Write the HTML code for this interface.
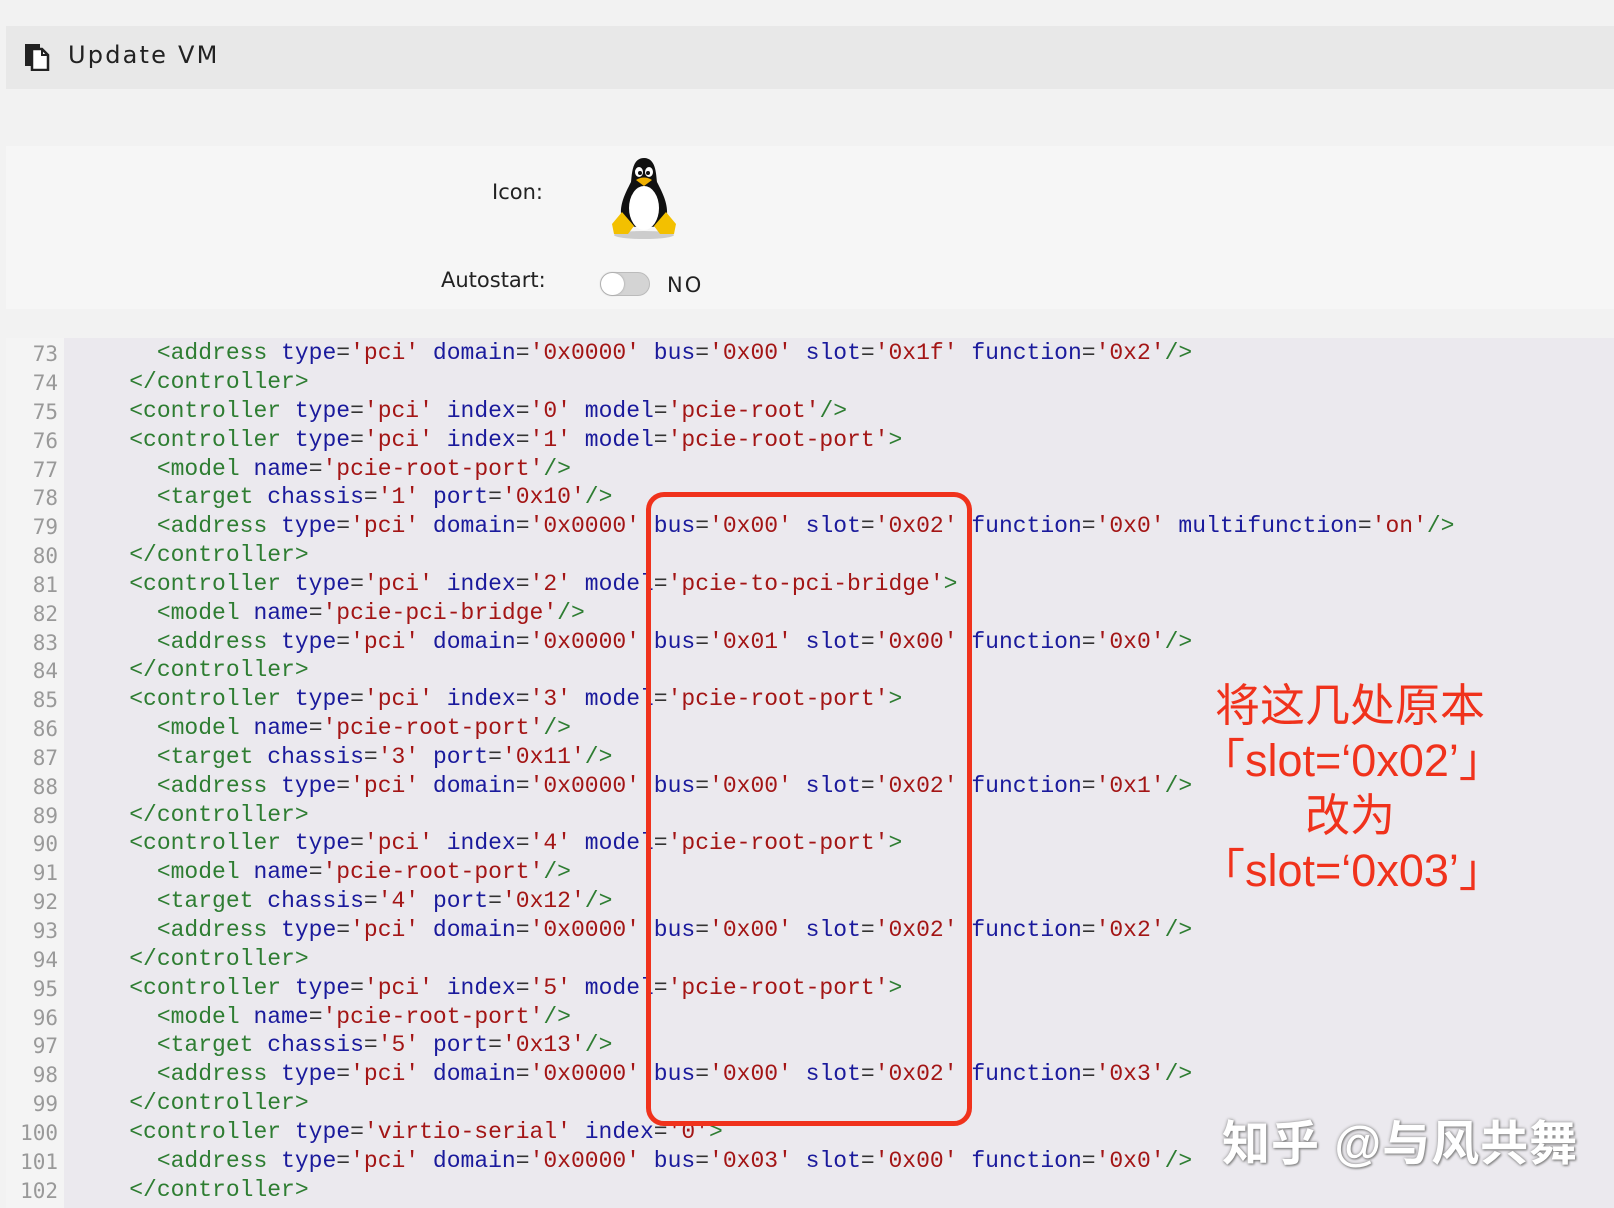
<!DOCTYPE html>
<html><head><meta charset="utf-8"><style>
*{margin:0;padding:0;box-sizing:border-box}
body{width:1614px;height:1208px;background:#f2f2f2;position:relative;overflow:hidden;font-family:"Liberation Sans","Noto Sans CJK SC",sans-serif}
.hdr{position:absolute;left:6px;top:26px;width:1608px;height:63px;background:#e8e8e8}
.hdr span{position:absolute;left:62px;top:15px;font-size:24px;letter-spacing:2.2px;color:#222;font-family:"DejaVu Sans",sans-serif}
.form{position:absolute;left:6px;top:146px;width:1608px;height:163px;background:#f6f6f6}
.lbl{position:absolute;font-size:21px;color:#222;font-family:"DejaVu Sans",sans-serif}
.code{position:absolute;left:6px;top:338px;width:1608px;height:870px;background:#ebe9ee}
.gut{position:absolute;left:6px;top:338px;width:58px;height:870px;background:#f4f4f4}
.ln{position:absolute;left:6px;width:52px;text-align:right;color:#999;font-family:"DejaVu Sans Mono",monospace;font-size:21px}
.cl{position:absolute;left:74px;white-space:pre;font-family:"Liberation Mono",monospace;font-size:23px;color:#333;letter-spacing:0}
#c{position:absolute;left:0;top:2px;width:1614px}
.t{color:#2e7d32}.a{color:#1a1a9c}.v{color:#a31515}
.box{position:absolute;left:646px;top:492px;width:326px;height:634px;border:5px solid #f0321c;border-radius:18px}
.note{position:absolute;left:1200px;width:300px;text-align:center;color:#f0321c;font-size:45px;line-height:55px;top:678px}
.wm{position:absolute;left:1222px;top:1104px;font-size:48px;letter-spacing:1px;color:#fff;font-weight:bold;text-shadow:0 0 3px #888,1px 1px 2px #777}
</style></head><body>
<div class="hdr">
<svg style="position:absolute;left:18px;top:17px" width="26" height="28" viewBox="0 0 26 28"><rect x="1" y="1" width="15" height="22" fill="#222"/><path d="M8 6h10l6 6v15H8z" fill="#fff" stroke="#222" stroke-width="2.5"/><path d="M18 6v6h6" fill="none" stroke="#222" stroke-width="2"/></svg>
<span>Update VM</span></div>
<div class="form">
<div class="lbl" style="left:486px;top:34px">Icon:</div>
<svg style="position:absolute;left:602px;top:10px" width="72" height="84" viewBox="0 0 72 84">
<ellipse cx="36" cy="79" rx="30" ry="4" fill="#ccc"/>
<path d="M36 2C24 2 24 18 23 26 18 36 10 50 14 64 18 74 54 74 58 64 62 50 54 36 49 26 48 18 48 2 36 2z" fill="#111"/>
<ellipse cx="36" cy="52" rx="15" ry="22" fill="#fff"/>
<ellipse cx="31" cy="16" rx="4" ry="5" fill="#fff"/><ellipse cx="41" cy="16" rx="4" ry="5" fill="#fff"/>
<circle cx="32" cy="17" r="2" fill="#111"/><circle cx="40" cy="17" r="2" fill="#111"/>
<path d="M28 24q8-5 16 0l-8 6z" fill="#f0b000"/>
<path d="M4 68l10-12 12 14-6 8-14 0z" fill="#f3c000"/><path d="M68 68l-10-12-12 14 6 8 14 0z" fill="#f3c000"/>
</svg>
<div class="lbl" style="left:435px;top:122px">Autostart:</div>
<div style="position:absolute;left:594px;top:126px;width:50px;height:24px;border-radius:12px;background:#d4d4d4;border:1px solid #bbb"><div style="width:23px;height:22px;border-radius:11px;background:#fff;box-shadow:0 0 2px #999"></div></div>
<div class="lbl" style="left:661px;top:127px;letter-spacing:2px">NO</div>
</div>
<div class="code"></div><div class="gut"></div>
<div id="c">
<div class="ln" style="top:340px">73</div><div class="cl" style="top:338px">      <span class="t">&lt;address</span> <span class="a">type</span>=<span class="v">'pci'</span> <span class="a">domain</span>=<span class="v">'0x0000'</span> <span class="a">bus</span>=<span class="v">'0x00'</span> <span class="a">slot</span>=<span class="v">'0x1f'</span> <span class="a">function</span>=<span class="v">'0x2'</span><span class="t">/&gt;</span></div>
<div class="ln" style="top:369px">74</div><div class="cl" style="top:367px">    <span class="t">&lt;/controller&gt;</span></div>
<div class="ln" style="top:398px">75</div><div class="cl" style="top:396px">    <span class="t">&lt;controller</span> <span class="a">type</span>=<span class="v">'pci'</span> <span class="a">index</span>=<span class="v">'0'</span> <span class="a">model</span>=<span class="v">'pcie-root'</span><span class="t">/&gt;</span></div>
<div class="ln" style="top:427px">76</div><div class="cl" style="top:425px">    <span class="t">&lt;controller</span> <span class="a">type</span>=<span class="v">'pci'</span> <span class="a">index</span>=<span class="v">'1'</span> <span class="a">model</span>=<span class="v">'pcie-root-port'</span><span class="t">&gt;</span></div>
<div class="ln" style="top:456px">77</div><div class="cl" style="top:454px">      <span class="t">&lt;model</span> <span class="a">name</span>=<span class="v">'pcie-root-port'</span><span class="t">/&gt;</span></div>
<div class="ln" style="top:484px">78</div><div class="cl" style="top:482px">      <span class="t">&lt;target</span> <span class="a">chassis</span>=<span class="v">'1'</span> <span class="a">port</span>=<span class="v">'0x10'</span><span class="t">/&gt;</span></div>
<div class="ln" style="top:513px">79</div><div class="cl" style="top:511px">      <span class="t">&lt;address</span> <span class="a">type</span>=<span class="v">'pci'</span> <span class="a">domain</span>=<span class="v">'0x0000'</span> <span class="a">bus</span>=<span class="v">'0x00'</span> <span class="a">slot</span>=<span class="v">'0x02'</span> <span class="a">function</span>=<span class="v">'0x0'</span> <span class="a">multifunction</span>=<span class="v">'on'</span><span class="t">/&gt;</span></div>
<div class="ln" style="top:542px">80</div><div class="cl" style="top:540px">    <span class="t">&lt;/controller&gt;</span></div>
<div class="ln" style="top:571px">81</div><div class="cl" style="top:569px">    <span class="t">&lt;controller</span> <span class="a">type</span>=<span class="v">'pci'</span> <span class="a">index</span>=<span class="v">'2'</span> <span class="a">model</span>=<span class="v">'pcie-to-pci-bridge'</span><span class="t">&gt;</span></div>
<div class="ln" style="top:600px">82</div><div class="cl" style="top:598px">      <span class="t">&lt;model</span> <span class="a">name</span>=<span class="v">'pcie-pci-bridge'</span><span class="t">/&gt;</span></div>
<div class="ln" style="top:629px">83</div><div class="cl" style="top:627px">      <span class="t">&lt;address</span> <span class="a">type</span>=<span class="v">'pci'</span> <span class="a">domain</span>=<span class="v">'0x0000'</span> <span class="a">bus</span>=<span class="v">'0x01'</span> <span class="a">slot</span>=<span class="v">'0x00'</span> <span class="a">function</span>=<span class="v">'0x0'</span><span class="t">/&gt;</span></div>
<div class="ln" style="top:657px">84</div><div class="cl" style="top:655px">    <span class="t">&lt;/controller&gt;</span></div>
<div class="ln" style="top:686px">85</div><div class="cl" style="top:684px">    <span class="t">&lt;controller</span> <span class="a">type</span>=<span class="v">'pci'</span> <span class="a">index</span>=<span class="v">'3'</span> <span class="a">model</span>=<span class="v">'pcie-root-port'</span><span class="t">&gt;</span></div>
<div class="ln" style="top:715px">86</div><div class="cl" style="top:713px">      <span class="t">&lt;model</span> <span class="a">name</span>=<span class="v">'pcie-root-port'</span><span class="t">/&gt;</span></div>
<div class="ln" style="top:744px">87</div><div class="cl" style="top:742px">      <span class="t">&lt;target</span> <span class="a">chassis</span>=<span class="v">'3'</span> <span class="a">port</span>=<span class="v">'0x11'</span><span class="t">/&gt;</span></div>
<div class="ln" style="top:773px">88</div><div class="cl" style="top:771px">      <span class="t">&lt;address</span> <span class="a">type</span>=<span class="v">'pci'</span> <span class="a">domain</span>=<span class="v">'0x0000'</span> <span class="a">bus</span>=<span class="v">'0x00'</span> <span class="a">slot</span>=<span class="v">'0x02'</span> <span class="a">function</span>=<span class="v">'0x1'</span><span class="t">/&gt;</span></div>
<div class="ln" style="top:802px">89</div><div class="cl" style="top:800px">    <span class="t">&lt;/controller&gt;</span></div>
<div class="ln" style="top:830px">90</div><div class="cl" style="top:828px">    <span class="t">&lt;controller</span> <span class="a">type</span>=<span class="v">'pci'</span> <span class="a">index</span>=<span class="v">'4'</span> <span class="a">model</span>=<span class="v">'pcie-root-port'</span><span class="t">&gt;</span></div>
<div class="ln" style="top:859px">91</div><div class="cl" style="top:857px">      <span class="t">&lt;model</span> <span class="a">name</span>=<span class="v">'pcie-root-port'</span><span class="t">/&gt;</span></div>
<div class="ln" style="top:888px">92</div><div class="cl" style="top:886px">      <span class="t">&lt;target</span> <span class="a">chassis</span>=<span class="v">'4'</span> <span class="a">port</span>=<span class="v">'0x12'</span><span class="t">/&gt;</span></div>
<div class="ln" style="top:917px">93</div><div class="cl" style="top:915px">      <span class="t">&lt;address</span> <span class="a">type</span>=<span class="v">'pci'</span> <span class="a">domain</span>=<span class="v">'0x0000'</span> <span class="a">bus</span>=<span class="v">'0x00'</span> <span class="a">slot</span>=<span class="v">'0x02'</span> <span class="a">function</span>=<span class="v">'0x2'</span><span class="t">/&gt;</span></div>
<div class="ln" style="top:946px">94</div><div class="cl" style="top:944px">    <span class="t">&lt;/controller&gt;</span></div>
<div class="ln" style="top:975px">95</div><div class="cl" style="top:973px">    <span class="t">&lt;controller</span> <span class="a">type</span>=<span class="v">'pci'</span> <span class="a">index</span>=<span class="v">'5'</span> <span class="a">model</span>=<span class="v">'pcie-root-port'</span><span class="t">&gt;</span></div>
<div class="ln" style="top:1004px">96</div><div class="cl" style="top:1002px">      <span class="t">&lt;model</span> <span class="a">name</span>=<span class="v">'pcie-root-port'</span><span class="t">/&gt;</span></div>
<div class="ln" style="top:1032px">97</div><div class="cl" style="top:1030px">      <span class="t">&lt;target</span> <span class="a">chassis</span>=<span class="v">'5'</span> <span class="a">port</span>=<span class="v">'0x13'</span><span class="t">/&gt;</span></div>
<div class="ln" style="top:1061px">98</div><div class="cl" style="top:1059px">      <span class="t">&lt;address</span> <span class="a">type</span>=<span class="v">'pci'</span> <span class="a">domain</span>=<span class="v">'0x0000'</span> <span class="a">bus</span>=<span class="v">'0x00'</span> <span class="a">slot</span>=<span class="v">'0x02'</span> <span class="a">function</span>=<span class="v">'0x3'</span><span class="t">/&gt;</span></div>
<div class="ln" style="top:1090px">99</div><div class="cl" style="top:1088px">    <span class="t">&lt;/controller&gt;</span></div>
<div class="ln" style="top:1119px">100</div><div class="cl" style="top:1117px">    <span class="t">&lt;controller</span> <span class="a">type</span>=<span class="v">'virtio-serial'</span> <span class="a">index</span>=<span class="v">'0'</span><span class="t">&gt;</span></div>
<div class="ln" style="top:1148px">101</div><div class="cl" style="top:1146px">      <span class="t">&lt;address</span> <span class="a">type</span>=<span class="v">'pci'</span> <span class="a">domain</span>=<span class="v">'0x0000'</span> <span class="a">bus</span>=<span class="v">'0x03'</span> <span class="a">slot</span>=<span class="v">'0x00'</span> <span class="a">function</span>=<span class="v">'0x0'</span><span class="t">/&gt;</span></div>
<div class="ln" style="top:1177px">102</div><div class="cl" style="top:1175px">    <span class="t">&lt;/controller&gt;</span></div>
</div>
<div class="box"></div>
<div class="note">将这几处原本<br>「slot=‘0x02’」<br>改为<br>「slot=‘0x03’」</div>
<div class="wm">知乎 @与风共舞</div>
</body></html>
